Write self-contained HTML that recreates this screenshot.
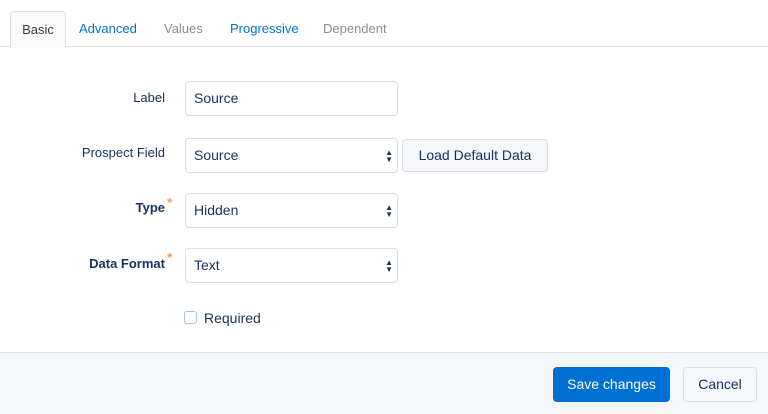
<!DOCTYPE html>
<html><head><style>
body{margin:0;width:768px;height:413px;background:#fff;font-family:"Liberation Sans",sans-serif;position:relative;overflow:hidden;color:#16325c}
.a{position:absolute}
.tabline{left:0;top:46px;width:768px;height:1px;background:#dde1e6}
.tab{top:11px;height:35px;line-height:35px;font-size:13px}
.basic{left:10px;width:54px;border:1px solid #dde1e6;border-bottom:none;border-radius:4px 4px 0 0;background:#fafafa;text-align:center;color:#3e3e3c;height:36px}
.lbl{font-size:13px;color:#16325c;text-align:right;width:165px;left:0}
.in{left:185px;font-size:14px;line-height:33px;padding-left:8px;box-sizing:border-box;width:213px;height:35px;border:1px solid #d8dde6;border-radius:4px}
.arr{position:absolute;right:4px;top:10px;font-size:8px;line-height:7px;color:#16325c}
.star{color:#ff9a3c;font-size:13px;font-weight:bold;line-height:10px}
</style></head><body>
<div class="a tabline"></div>
<div class="a tab basic">Basic</div>
<div class="a tab" style="left:79px;color:#0070d2">Advanced</div>
<div class="a tab" style="left:164px;color:#8c8c8c">Values</div>
<div class="a tab" style="left:230px;color:#0070d2">Progressive</div>
<div class="a tab" style="left:323px;color:#8c8c8c">Dependent</div>

<div class="a lbl" style="top:90px">Label</div>
<div class="a in" style="top:81px">Source</div>

<div class="a lbl" style="top:145px">Prospect Field</div>
<div class="a in" style="top:138px">Source<div class="arr">▲<br>▼</div></div>
<div class="a" style="left:402px;top:139px;width:146px;height:33px;box-sizing:border-box;border:1px solid #d8dde6;border-radius:4px;background:#f4f6f9;font-size:14px;line-height:31px;text-align:center;color:#16325c">Load Default Data</div>

<div class="a lbl" style="top:200px;font-weight:bold">Type</div>
<div class="a star" style="left:167px;top:198px">*</div>
<div class="a in" style="top:193px">Hidden<div class="arr">▲<br>▼</div></div>

<div class="a lbl" style="top:256px;font-weight:bold">Data Format</div>
<div class="a star" style="left:167px;top:253px">*</div>
<div class="a in" style="top:248px">Text<div class="arr">▲<br>▼</div></div>

<div class="a" style="left:184px;top:311px;width:11px;height:11px;border:1.5px solid #9fc3ec;border-radius:3px"></div>
<div class="a" style="left:204px;top:310px;font-size:14px">Required</div>

<div class="a" style="left:0;top:352px;width:768px;height:61px;background:#f4f6f9;border-top:1px solid #dde1e6"></div>
<div class="a" style="left:553px;top:367px;width:117px;height:35px;background:#0070d2;border-radius:4px;color:#fff;font-size:14px;line-height:35px;text-align:center">Save changes</div>
<div class="a" style="left:683px;top:367px;width:74px;height:35px;box-sizing:border-box;background:#f4f6f9;border:1px solid #d8dde6;border-radius:4px;color:#16325c;font-size:14px;line-height:33px;text-align:center">Cancel</div>
</body></html>
